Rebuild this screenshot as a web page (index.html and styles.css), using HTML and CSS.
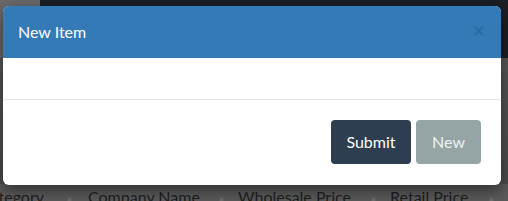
FILE: index.html
```html
<!DOCTYPE html>
<html>
<head>
<meta charset="utf-8">
<link rel="stylesheet" href="styles.css">
</head>
<body>
<div class="page">
  <div class="topbar"><div class="topbar-side"></div><div class="navbar"></div></div>
  <div class="spacer"></div>
  <div class="thead">
    <div class="th th-cat"><span>Category</span><span class="sort">&#9650;</span></div>
    <div class="th th-company"><span>Company Name</span><span class="sort">&#9650;</span></div>
    <div class="th th-whole"><span>Wholesale Price</span><span class="sort">&#9650;</span></div>
    <div class="th th-retail"><span>Retail Price</span><span class="sort">&#9650;</span></div>
  </div>
</div>
<div class="modal">
  <div class="modal-header">
    <h4 class="modal-title">New Item</h4>
    <span class="close">&times;</span>
  </div>
  <div class="modal-body"></div>
  <div class="modal-footer">
    <button class="btn btn-primary">Submit</button>
    <button class="btn btn-default">New</button>
  </div>
</div>
</body>
</html>
```
FILE: styles.css
```css
html, body {
  margin: 0;
  padding: 0;
}
body {
  width: 508px;
  height: 201px;
  overflow: hidden;
  background: #5b5b5b;
  font-family: Lato, "Open Sans", sans-serif;
  position: relative;
}
.page {
  display: flex;
  flex-direction: column;
  height: 201px;
}
.topbar {
  display: flex;
  height: 58px;
  flex: none;
}
.topbar-side {
  width: 40px;
  background: #6a6a6a;
}
.navbar {
  flex: 1;
  background: #1a1f27;
}
.spacer {
  flex: 1;
  background: linear-gradient(#585858, #4c4c4c);
}
.thead {
  flex: none;
  box-sizing: border-box;
  height: 17px;
  display: flex;
  align-items: flex-start;
  background: #5a5a5a;
  color: #1e1e1e;
  font-size: 16px;
  line-height: 18px;
  padding-top: 4px;
  margin-left: -20px;
  overflow: hidden;
}
.th {
  display: flex;
  justify-content: space-between;
  padding-right: 12px;
  box-sizing: border-box;
  flex: none;
}
.sort {
  font-size: 9px;
  color: #707070;
  line-height: 22px;
}
.th-cat { width: 108px; padding-right: 14px; }
.th-company { width: 150px; }
.th-whole { width: 152px; }
.th-retail { width: 118px; }
.modal {
  position: absolute;
  left: 3px;
  top: 6px;
  width: 498px;
  height: 179px;
  background: #fff;
  border-radius: 6px;
  box-shadow: 0 5px 15px rgba(0, 0, 0, 0.5);
  display: flex;
  flex-direction: column;
  overflow: hidden;
}
.modal-header {
  height: 52px;
  background: #337ab7;
  display: flex;
  align-items: center;
  justify-content: space-between;
  padding: 0 16px 0 15px;
  box-sizing: border-box;
}
.modal-title {
  margin: 0;
  color: #fff;
  font-size: 16px;
  font-weight: 400;
  line-height: 20px;
}
.close {
  color: #2a6aa3;
  font-size: 21px;
  font-weight: 700;
  line-height: 20px;
  margin-top: -4px;
}
.modal-body {
  height: 41px;
  border-bottom: 1px solid #e5e5e5;
}
.modal-footer {
  flex: 1;
  display: flex;
  justify-content: flex-end;
  align-items: flex-start;
  gap: 5px;
  padding: 20px 20px 0 0;
}
.btn {
  font-family: Lato, "Open Sans", sans-serif;
  font-size: 16px;
  height: 44px;
  border: none;
  border-radius: 4px;
  color: #fff;
  padding: 0;
  line-height: 44px;
}
.btn-primary {
  background: #2c3e50;
  width: 80px;
}
.btn-default {
  background: #95a5a6;
  color: #eef2f2;
  width: 65px;
}
```
